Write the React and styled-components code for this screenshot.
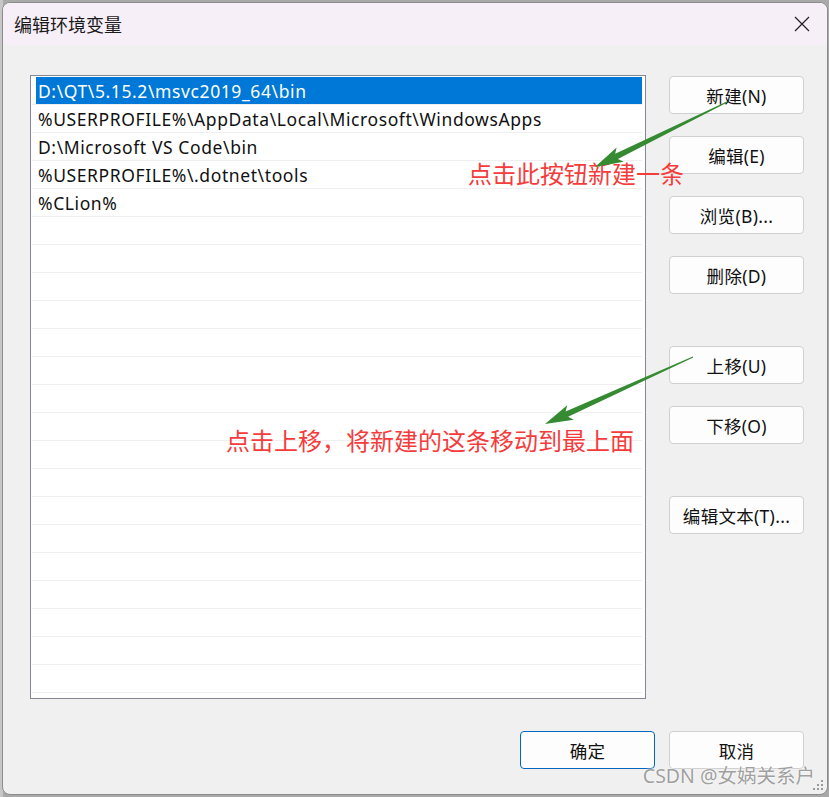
import React from "react";
import styled, { createGlobalStyle } from "styled-components";

const GlobalStyle = createGlobalStyle`
  html, body {
    margin: 0;
    padding: 0;
    background: #a9a9a9;
  }
  body {
    font-family: "Noto Sans", "Noto Sans CJK SC", sans-serif;
  }
`;

const Page = styled.div`
  position: relative;
  width: 829px;
  height: 797px;
  overflow: hidden;
  background: linear-gradient(90deg, #c7c7c7 0, #c7c7c7 3px, #a9a9a9 3px);
`;

const Window = styled.div`
  position: absolute;
  left: 2px;
  top: 2px;
  width: 824px;
  height: 791px;
  display: flex;
  flex-direction: column;
  background: #f0f0f0;
  border: 1px solid #8c8c8c;
  border-radius: 8px;
  overflow: hidden;
`;

const TitleBar = styled.div`
  height: 42px;
  flex-shrink: 0;
  display: flex;
  align-items: center;
  justify-content: space-between;
  padding: 0 17px 0 11px;
  background: #f7eff7;
`;

const Title = styled.div`
  font-family: "Noto Sans CJK SC", sans-serif;
  font-size: 18px;
  color: #1a1a1a;
`;

const CloseIcon = () => (
  <svg width="16" height="16" viewBox="0 0 16 16">
    <path d="M1 1 L15 15 M15 1 L1 15" stroke="#1f1f1f" strokeWidth="1.2" />
  </svg>
);

const Body = styled.div`
  flex: 1;
  display: flex;
  flex-direction: column;
  padding: 30px 23px 24px 27px;
`;

const Top = styled.div`
  display: flex;
  gap: 23px;
`;

const ListBox = styled.div`
  width: 614px;
  height: 621px;
  border: 1px solid #858892;
  background: #ffffff;
  padding-top: 1px;
  box-sizing: content-box;
  overflow: hidden;
`;

const Row = styled.div`
  height: 27px;
  margin: 0 3px 0 1px;
  padding-left: 4px;
  display: flex;
  border-bottom: 1px solid #efefef;
`;

const Cell = styled.div`
  flex: 1;
  display: flex;
  align-items: center;
  padding-left: 2px;
  font-size: 17.5px;
  letter-spacing: 0.6px;
  white-space: nowrap;
  color: ${({ selected }) => (selected ? "#ffffff" : "#111111")};
  background: ${({ selected }) => (selected ? "#0078d7" : "transparent")};
`;

const ButtonColumn = styled.div`
  display: flex;
  flex-direction: column;
  padding-top: 1px;
`;

const Group = styled.div`
  display: flex;
  flex-direction: column;
  gap: 22px;
  margin-bottom: 52px;
`;

const Button = styled.div`
  width: 133px;
  height: 36px;
  display: flex;
  align-items: center;
  justify-content: center;
  background: #fdfdfd;
  border: 1px solid ${({ primary }) => (primary ? "#0067c0" : "#d0d0d0")};
  border-radius: 4px;
  font-family: "Noto Sans", "Noto Sans CJK SC", sans-serif;
  font-size: 17.5px;
  letter-spacing: 0.3px;
  color: #111111;
`;

const Footer = styled.div`
  display: flex;
  justify-content: flex-end;
  gap: 14px;
  margin-top: 32px;
`;

const Overlay = styled.svg`
  position: absolute;
  left: 0;
  top: 0;
  width: 829px;
  height: 797px;
  pointer-events: none;
`;

const Note = styled.div`
  position: absolute;
  left: ${({ x }) => x}px;
  top: ${({ y }) => y}px;
  font-family: "Noto Sans CJK SC", sans-serif;
  font-size: 24px;
  line-height: 1;
  color: #f53c3c;
  white-space: nowrap;
`;

const Watermark = styled.div`
  position: absolute;
  right: 14px;
  bottom: 8px;
  font-family: "Noto Sans", "Noto Sans CJK SC", sans-serif;
  font-size: 19.5px;
  color: #a0a0a0;
  text-shadow: 0 0 2px #ffffff, 0 0 1px #ffffff;
  white-space: nowrap;
`;

const paths = [
  "D:\\QT\\5.15.2\\msvc2019_64\\bin",
  "%USERPROFILE%\\AppData\\Local\\Microsoft\\WindowsApps",
  "D:\\Microsoft VS Code\\bin",
  "%USERPROFILE%\\.dotnet\\tools",
  "%CLion%",
];

const rows = Array.from({ length: 23 }, (_, i) => paths[i] || "");

function arrowPoints([tx, ty], [hx, hy]) {
  const dx = hx - tx;
  const dy = hy - ty;
  const len = Math.hypot(dx, dy);
  const ux = dx / len;
  const uy = dy / len;
  const nx = -uy;
  const ny = ux;
  const bx = hx - 24 * ux;
  const by = hy - 24 * uy;
  const p = (x, y, w) => `${(x + nx * w).toFixed(1)},${(y + ny * w).toFixed(1)}`;
  return [
    p(tx, ty, 0.5),
    p(bx, by, 3),
    p(bx - 4 * ux, by - 4 * uy, 8),
    `${hx},${hy}`,
    p(bx - 4 * ux, by - 4 * uy, -8),
    p(bx, by, -3),
    p(tx, ty, -0.5),
  ].join(" ");
}

const Grip = () => (
  <svg
    width="12"
    height="12"
    viewBox="0 0 12 12"
    style={{ position: "absolute", right: 3, bottom: 3 }}
  >
    {[
      [9, 1],
      [5, 5],
      [9, 5],
      [1, 9],
      [5, 9],
      [9, 9],
    ].map(([x, y]) => (
      <rect key={`${x}-${y}`} x={x} y={y} width="2" height="2" fill="#9a9a9a" />
    ))}
  </svg>
);

export default function App() {
  return (
    <>
      <GlobalStyle />
      <Page>
        <Window>
          <TitleBar>
            <Title>编辑环境变量</Title>
            <CloseIcon />
          </TitleBar>
          <Body>
            <Top>
              <ListBox>
                {rows.map((text, i) => (
                  <Row key={i}>
                    <Cell selected={i === 0}>{text}</Cell>
                  </Row>
                ))}
              </ListBox>
              <ButtonColumn>
                <Group>
                  <Button>新建(N)</Button>
                  <Button>编辑(E)</Button>
                  <Button>浏览(B)...</Button>
                  <Button>删除(D)</Button>
                </Group>
                <Group>
                  <Button>上移(U)</Button>
                  <Button>下移(O)</Button>
                </Group>
                <Group>
                  <Button>编辑文本(T)...</Button>
                </Group>
              </ButtonColumn>
            </Top>
            <Footer>
              <Button primary>确定</Button>
              <Button>取消</Button>
            </Footer>
          </Body>
          <Grip />
        </Window>
        <Note x={468} y={161}>点击此按钮新建一条</Note>
        <Note x={226} y={428}>点击上移，将新建的这条移动到最上面</Note>
        <Overlay viewBox="0 0 829 797">
          <polygon points={arrowPoints([727, 102], [595, 167])} fill="#358a32" />
          <polygon points={arrowPoints([693, 357], [545, 424])} fill="#358a32" />
        </Overlay>
        <Watermark>CSDN @女娲关系户</Watermark>
      </Page>
    </>
  );
}
